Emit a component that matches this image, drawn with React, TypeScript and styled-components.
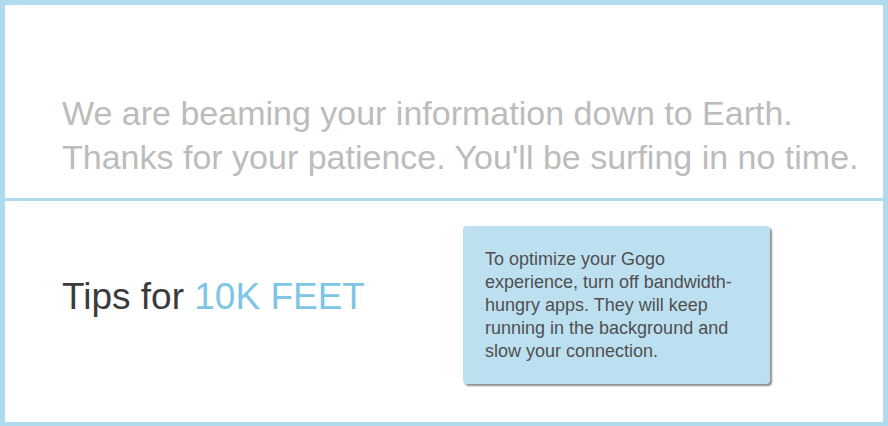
import React from "react";
import styled, { createGlobalStyle } from "styled-components";

const GlobalStyle = createGlobalStyle`
  html, body {
    margin: 0;
    padding: 0;
    background: #fff;
  }
  body {
    font-family: "Liberation Sans", Arial, sans-serif;
  }
`;

const Frame = styled.div`
  box-sizing: border-box;
  width: 888px;
  height: 426px;
  border: 5px solid #aedbee;
  border-bottom-width: 4px;
  display: flex;
  flex-direction: column;
  background: #fff;
`;

const StatusSection = styled.section`
  box-sizing: border-box;
  height: 193px;
  padding: 86px 0 0 57px;
`;

const StatusLine = styled.p`
  margin: 0;
  font-size: 34px;
  line-height: 44px;
  color: #bcbcbc;
  white-space: nowrap;
`;

const TipsSection = styled.section`
  box-sizing: border-box;
  flex: 1;
  border-top: 3px solid #aedbee;
  display: flex;
  align-items: flex-start;
  padding: 25px 0 0 57px;
`;

const TipsHeading = styled.h2`
  margin: 47px 0 0;
  width: 401px;
  font-size: 37px;
  font-weight: 400;
  line-height: 48px;
  color: #3b3b3b;
  white-space: nowrap;
`;

const Accent = styled.span`
  color: #7fc5e5;
`;

const TipCard = styled.div`
  box-sizing: border-box;
  width: 307px;
  height: 158px;
  padding: 22px 22px 0 22px;
  background: #bde0f1;
  border-radius: 4px;
  box-shadow: 2px 2px 2px rgba(0, 0, 0, 0.45);
  font-size: 18px;
  line-height: 23px;
  color: #4f4f4f;
`;

const App: React.FC = () => {
  return (
    <>
      <GlobalStyle />
      <Frame>
        <StatusSection>
          <StatusLine>We are beaming your information down to Earth.</StatusLine>
          <StatusLine>Thanks for your patience. You'll be surfing in no time.</StatusLine>
        </StatusSection>
        <TipsSection>
          <TipsHeading>
            Tips for <Accent>10K FEET</Accent>
          </TipsHeading>
          <TipCard>
            To optimize your Gogo experience, turn off bandwidth-hungry apps. They
            will keep running in the background and slow your connection.
          </TipCard>
        </TipsSection>
      </Frame>
    </>
  );
};

export default App;
